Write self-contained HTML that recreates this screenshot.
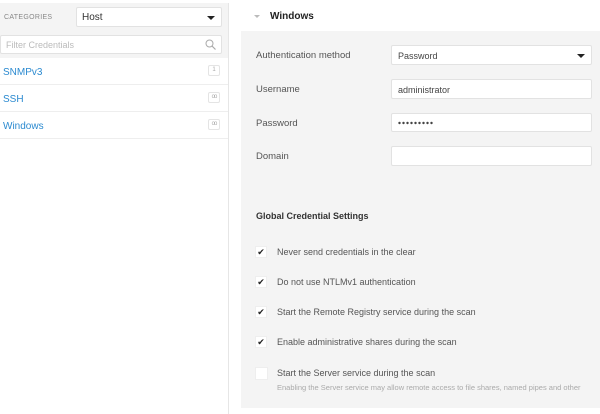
<!DOCTYPE html>
<html><head><meta charset="utf-8"><style>
*{box-sizing:border-box;margin:0;padding:0}
body{width:600px;height:414px;background:#fff;font-family:"Liberation Sans",sans-serif;position:relative;overflow:hidden;color:#444}
.abs{position:absolute}
.left{left:0;top:3px;width:229px;height:411px;border-right:1px solid #e6e6e6;background:#fff}
.lt{left:0;top:3px;width:228px;height:55px;background:#f4f4f4}
.inp{background:#fff;border:1px solid #e2e2e2;border-radius:2px}
.caret{width:0;height:0;border-left:4px solid transparent;border-right:4px solid transparent;border-top:4px solid #222}
.item{left:0;width:228px;height:27px;border-bottom:1px solid #eee;font-size:10px;color:#2b8ad0;padding:9px 0 0 3px}
.badge{position:absolute;right:8px;top:7px;width:12px;height:11px;border:1px solid #e4e4e4;border-radius:2px;font-size:6px;color:#aaa;text-align:center;line-height:9px}
.right{left:241px;top:3px;width:359px;height:405px;background:#f4f4f4}
.lab{font-size:9.5px;color:#555;left:256px}
.cb{left:255px;width:12px;height:12px;background:#fff;border:1px solid #eee;font-size:9px;line-height:11px;text-align:center;color:#222}
.ct{left:277px;font-size:9px;color:#555}
</style></head><body>
<div class="abs left"></div>
<div class="abs lt"></div>
<div class="abs" style="left:4px;top:14px;font-size:7px;color:#888;letter-spacing:.3px">CATEGORIES</div>
<div class="abs inp" style="left:76px;top:7px;width:146px;height:20px;font-size:10px;color:#333;padding:4px 0 0 5px">Host<div class="abs caret" style="right:6px;top:8px"></div></div>
<div class="abs inp" style="left:0;top:35px;width:222px;height:19px;font-size:9px;color:#bbb;padding:4px 0 0 5px">Filter Credentials
<svg class="abs" style="right:5px;top:3px" width="11" height="11" viewBox="0 0 11 11"><circle cx="4.5" cy="4.5" r="3.5" fill="none" stroke="#aaa" stroke-width="1"/><path d="M7 7l3.5 3.5" stroke="#aaa" stroke-width="1.2"/></svg></div>
<div class="abs item" style="top:58px">SNMPv3<div class="badge">1</div></div>
<div class="abs item" style="top:85px">SSH<div class="badge" style="letter-spacing:-1px">oo</div></div>
<div class="abs item" style="top:112px">Windows<div class="badge" style="letter-spacing:-1px">oo</div></div>
<div class="abs right"></div>
<div class="abs" style="left:241px;top:3px;width:359px;height:28px;background:#fff"></div>
<div class="abs caret" style="left:254px;top:15px;border-top-color:#bbb;border-width:3px 3px 0 3px"></div>
<div class="abs" style="left:270px;top:11px;font-size:10px;font-weight:bold;color:#222">Windows</div>
<div class="abs lab" style="top:50px">Authentication method</div>
<div class="abs lab" style="top:84px">Username</div>
<div class="abs lab" style="top:118px">Password</div>
<div class="abs lab" style="top:151px">Domain</div>
<div class="abs inp" style="left:391px;top:45px;width:201px;height:20px;font-size:9px;color:#444;padding:5px 0 0 6px">Password<div class="abs caret" style="right:6px;top:8px"></div></div>
<div class="abs inp" style="left:391px;top:79px;width:201px;height:20px;font-size:9px;color:#444;padding:5px 0 0 6px">administrator</div>
<div class="abs inp" style="left:391px;top:113px;width:201px;height:19px">
<svg class="abs" style="left:6px;top:7px" width="40" height="4" viewBox="0 0 40 4"><g fill="#444"><circle cx="1.5" cy="2" r="1.2"/><circle cx="5.5" cy="2" r="1.2"/><circle cx="9.5" cy="2" r="1.2"/><circle cx="13.5" cy="2" r="1.2"/><circle cx="17.5" cy="2" r="1.2"/><circle cx="21.5" cy="2" r="1.2"/><circle cx="25.5" cy="2" r="1.2"/><circle cx="29.5" cy="2" r="1.2"/><circle cx="33.5" cy="2" r="1.2"/></g></svg></div>
<div class="abs inp" style="left:391px;top:146px;width:201px;height:20px"></div>
<div class="abs" style="left:256px;top:211px;font-size:9px;font-weight:bold;color:#333">Global Credential Settings</div>
<div class="abs cb" style="top:246px">✔</div><div class="abs ct" style="top:247px">Never send credentials in the clear</div>
<div class="abs cb" style="top:276px">✔</div><div class="abs ct" style="top:277px">Do not use NTLMv1 authentication</div>
<div class="abs cb" style="top:306px">✔</div><div class="abs ct" style="top:307px">Start the Remote Registry service during the scan</div>
<div class="abs cb" style="top:336px">✔</div><div class="abs ct" style="top:337px">Enable administrative shares during the scan</div>
<div class="abs cb" style="top:367px;width:13px;height:13px"></div><div class="abs ct" style="top:368px">Start the Server service during the scan</div>
<div class="abs" style="left:277px;top:383px;font-size:7.5px;color:#aaa;white-space:nowrap">Enabling the Server service may allow remote access to file shares, named pipes and other</div>
</body></html>
